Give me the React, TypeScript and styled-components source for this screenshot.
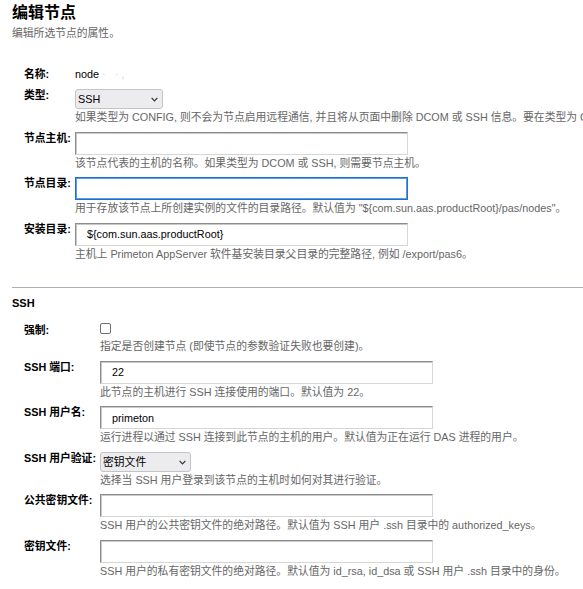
import React from 'react'
import styled, { createGlobalStyle } from 'styled-components'

const GlobalStyle = createGlobalStyle`
    html, body {
        margin: 0;
        padding: 0;
        overflow: hidden;
        background: #fff;
    }
    body {
        font-family: "Liberation Sans", "Noto Sans CJK SC", sans-serif;
        font-size: 10.8px;
        color: #000;
    }
`

const Page = styled.div`
    padding: 3px 0 0 12px;
`

const Title = styled.h1`
    margin: 0;
    font-size: 16px;
    line-height: 20px;
    font-weight: bold;
`

const Subtitle = styled.p`
    margin: 2px 0 0;
    line-height: 16px;
    color: #666;
`

const Section = styled.div<{ $top: number }>`
    display: flex;
    flex-direction: column;
    gap: 6.5px;
    padding-left: 12px;
    margin-top: ${p => p.$top}px;
`

const Row = styled.div<{ $label: number }>`
    display: grid;
    grid-template-columns: ${p => p.$label}px 1fr;
`

const Label = styled.label`
    font-weight: bold;
    line-height: 12px;
    white-space: nowrap;
`

const Field = styled.div`
    display: flex;
    flex-direction: column;
    align-items: flex-start;
    white-space: nowrap;
    min-width: 0;
`

const Help = styled.div`
    color: #666;
    line-height: 16px;
`

const StaticValue = styled.div`
    line-height: 12px;
    padding-bottom: 2.5px;
`

const Redacted = styled.span`
    color: #d0d0d0;
    margin-left: 3px;
    letter-spacing: 3px;
`

const TextInput = styled.input<{ $focused?: boolean }>`
    box-sizing: border-box;
    width: 333px;
    height: 23px;
    margin: 0;
    padding: 0 0 0 11px;
    font: inherit;
    color: #000;
    background: #fff;
    border: 1px solid;
    border-color: ${p => p.$focused ? '#1f6fd1' : '#8d8d8d #d6d6d6 #d6d6d6 #8d8d8d'};
    box-shadow: ${p => p.$focused ? 'inset 0 0 0 1px #5b9be6' : 'inset 1px 1px 0 #c9c9c9'};
    outline: none;
`

const SelectBox = styled.div<{ $width: number }>`
    position: relative;
    width: ${p => p.$width}px;
    height: 20px;
`

const Select = styled.select`
    appearance: none;
    box-sizing: border-box;
    width: 100%;
    height: 100%;
    margin: 0;
    padding: 0 0 0 2px;
    font: inherit;
    color: #000;
    background: #ececef;
    border: 1px solid #c4c4c8;
    border-radius: 3px;
    outline: none;
`

const Chevron = styled.svg`
    position: absolute;
    right: 5px;
    top: 8px;
    pointer-events: none;
`

const Checkbox = styled.input`
    appearance: none;
    display: block;
    box-sizing: border-box;
    width: 11px;
    height: 11px;
    margin: -1px 0 4px 0;
    border: 1px solid #6f6f6f;
    border-radius: 2px;
    background: #fff;
`

const Divider = styled.hr`
    margin: 25.5px 0 0;
    border: 0;
    height: 1px;
    background: #a9b0b7;
`

const SectionTitle = styled.h2`
    margin: 8px 0 0;
    font-size: 11px;
    line-height: 14px;
    font-weight: bold;
`

const Dropdown = ({ value, options, width }: { value: string; options: string[]; width: number }) => (
    <SelectBox $width={width}>
        <Select defaultValue={value}>
            {options.map(o => <option key={o}>{o}</option>)}
        </Select>
        <Chevron width="7" height="5" viewBox="0 0 7 5">
            <path d="M0.6 0.8 L3.5 3.8 L6.4 0.8" fill="none" stroke="#333" strokeWidth="1.2" />
        </Chevron>
    </SelectBox>
)

const App: React.FunctionComponent = () => {
    return (
        <Page>
            <GlobalStyle />
            <Title>编辑节点</Title>
            <Subtitle>编辑所选节点的属性。</Subtitle>

            <Section $top={27}>
                <Row $label={51}>
                    <Label>名称:</Label>
                    <StaticValue>node<Redacted>· ·,</Redacted></StaticValue>
                </Row>
                <Row $label={51}>
                    <Label>类型:</Label>
                    <Field>
                        <Dropdown value="SSH" options={['CONFIG', 'SSH', 'DCOM']} width={88} />
                        <Help>如果类型为 CONFIG, 则不会为节点启用远程通信, 并且将从页面中删除 DCOM 或 SSH 信息。要在类型为 CONFIG 的节点上创建实例, 请使用本地子命令。</Help>
                    </Field>
                </Row>
                <Row $label={51}>
                    <Label>节点主机:</Label>
                    <Field>
                        <TextInput defaultValue="" />
                        <Help>该节点代表的主机的名称。如果类型为 DCOM 或 SSH, 则需要节点主机。</Help>
                    </Field>
                </Row>
                <Row $label={51}>
                    <Label>节点目录:</Label>
                    <Field>
                        <TextInput $focused defaultValue="" />
                        <Help>用于存放该节点上所创建实例的文件的目录路径。默认值为 "${'{'}com.sun.aas.productRoot{'}'}/pas/nodes"。</Help>
                    </Field>
                </Row>
                <Row $label={51}>
                    <Label>安装目录:</Label>
                    <Field>
                        <TextInput defaultValue="${com.sun.aas.productRoot}" />
                        <Help>主机上 Primeton AppServer 软件基安装目录父目录的完整路径, 例如 /export/pas6。</Help>
                    </Field>
                </Row>
            </Section>

            <Divider />
            <SectionTitle>SSH</SectionTitle>

            <Section $top={14}>
                <Row $label={76}>
                    <Label>强制:</Label>
                    <Field>
                        <Checkbox type="checkbox" />
                        <Help>指定是否创建节点 (即使节点的参数验证失败也要创建)。</Help>
                    </Field>
                </Row>
                <Row $label={76}>
                    <Label>SSH 端口:</Label>
                    <Field>
                        <TextInput defaultValue="22" />
                        <Help>此节点的主机进行 SSH 连接使用的端口。默认值为 22。</Help>
                    </Field>
                </Row>
                <Row $label={76}>
                    <Label>SSH 用户名:</Label>
                    <Field>
                        <TextInput defaultValue="primeton" />
                        <Help>运行进程以通过 SSH 连接到此节点的主机的用户。默认值为正在运行 DAS 进程的用户。</Help>
                    </Field>
                </Row>
                <Row $label={76}>
                    <Label>SSH 用户验证:</Label>
                    <Field>
                        <Dropdown value="密钥文件" options={['密钥文件', '密码']} width={91} />
                        <Help>选择当 SSH 用户登录到该节点的主机时如何对其进行验证。</Help>
                    </Field>
                </Row>
                <Row $label={76}>
                    <Label>公共密钥文件:</Label>
                    <Field>
                        <TextInput defaultValue="" />
                        <Help>SSH 用户的公共密钥文件的绝对路径。默认值为 SSH 用户 .ssh 目录中的 authorized_keys。</Help>
                    </Field>
                </Row>
                <Row $label={76}>
                    <Label>密钥文件:</Label>
                    <Field>
                        <TextInput defaultValue="" />
                        <Help>SSH 用户的私有密钥文件的绝对路径。默认值为 id_rsa, id_dsa 或 SSH 用户 .ssh 目录中的身份。</Help>
                    </Field>
                </Row>
            </Section>
        </Page>
    )
}

export default App
